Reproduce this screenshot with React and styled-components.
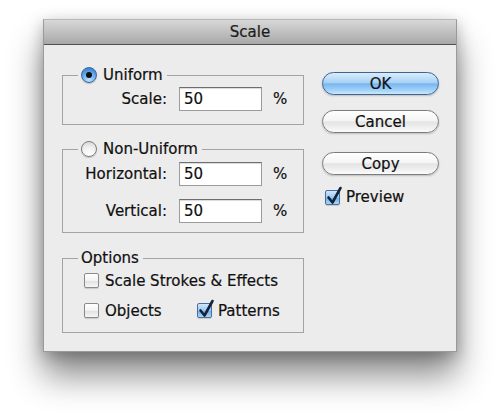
import React from 'react'
import styled, { createGlobalStyle } from 'styled-components';

const GlobalStyle = createGlobalStyle`
  html, body {
    margin: 0;
    padding: 0;
    background: #ffffff;
  }
  body {
    font-family: "DejaVu Sans", "Liberation Sans", sans-serif;
    color: #101010;
    -webkit-text-stroke: 0.2px #101010;
  }
`;

const Page = styled.div`
  width: 500px;
  height: 413px;
  padding: 19px 0 0 43px;
  box-sizing: border-box;
  overflow: hidden;
`;

const Dialog = styled.div`
  width: 414px;
  height: 333px;
  box-sizing: border-box;
  background: #ececec;
  border: 1px solid #9a9a9a;
  border-top: 1px solid #b8b8b8;
  box-shadow: 0 24px 32px rgba(0, 0, 0, 0.45), 0 4px 14px rgba(0, 0, 0, 0.25);
  display: flex;
  flex-direction: column;
`;

const TitleBar = styled.div`
  height: 24px;
  flex: none;
  background: linear-gradient(#d8d8d8, #a8a8a8);
  border-bottom: 1px solid #4f4f4f;
  display: flex;
  align-items: center;
  justify-content: center;
  font-size: 15px;
  color: #1e1e1e;
`;

const Body = styled.div`
  display: flex;
  gap: 18px;
  padding: 21px 0 0 18px;
`;

const LeftColumn = styled.div`
  width: 242px;
  display: flex;
  flex-direction: column;
`;

const Group = styled.fieldset`
  margin: 0 0 ${p => p.$gap || 0}px 0;
  padding: ${p => p.$pad || '3px 0 13px 0'};
  min-width: 0;
  border: 1px solid #a3a3a3;
  display: flex;
  flex-direction: column;
  gap: ${p => p.$rowGap || 0}px;
`;

const Legend = styled.legend`
  margin-left: 15px;
  padding: 0 4px 0 3px;
  height: 18px;
  display: flex;
  align-items: center;
  gap: 6px;
  font-size: 15px;
  line-height: 18px;
`;

const Radio = styled.span`
  width: 16px;
  height: 16px;
  box-sizing: border-box;
  border-radius: 50%;
  display: inline-flex;
  align-items: center;
  justify-content: center;
  border: 1px solid ${p => (p.$on ? '#3d679b' : '#7d7d7d')};
  background: ${p =>
    p.$on
      ? 'radial-gradient(circle at 50% 85%, #bfe2ff 0%, #6fb0ee 45%, #3f86d6 80%)'
      : 'radial-gradient(circle at 50% 90%, #ffffff 0%, #f1f1f1 50%, #d2d2d2 100%)'};
  box-shadow: 0 1px 1px rgba(0, 0, 0, 0.2);
  &::after {
    content: '';
    display: ${p => (p.$on ? 'block' : 'none')};
    width: 6px;
    height: 6px;
    border-radius: 50%;
    background: #111;
  }
`;

const Row = styled.div`
  display: grid;
  grid-template-columns: 104px 83px auto;
  column-gap: 12px;
  align-items: center;
  font-size: 15px;
`;

const Label = styled.span`
  text-align: right;
`;

const Input = styled.div`
  height: 24px;
  box-sizing: border-box;
  background: #fff;
  border: 1px solid #9b9b9b;
  border-top-color: #6e6e6e;
  box-shadow: inset 0 1px 1px rgba(0, 0, 0, 0.15);
  padding: 0 4px;
  display: flex;
  align-items: center;
  font-size: 15px;
`;

const Percent = styled.span`
  margin-left: -1px;
`;

const CheckRow = styled.div`
  height: 19px;
  display: flex;
  align-items: center;
  padding-left: 21px;
`;

const CheckItem = styled.label`
  display: flex;
  align-items: center;
  gap: 6px;
  font-size: 15px;
  width: ${p => (p.$w ? `${p.$w}px` : 'auto')};
`;

const Box = styled.span`
  position: relative;
  width: 15px;
  height: 15px;
  box-sizing: border-box;
  border-radius: 2px;
  border: 1px solid ${p => (p.$on ? '#4a6f9e' : '#8a8a8a')};
  background: ${p =>
    p.$on
      ? 'linear-gradient(#cfe6fc 0%, #9ccaf3 50%, #72b0ec 55%, #a9d6fb 100%)'
      : 'linear-gradient(#ffffff 0%, #f3f3f3 50%, #e2e2e2 55%, #f6f6f6 100%)'};
  box-shadow: 0 1px 1px rgba(0, 0, 0, 0.15);
  flex: none;
  svg {
    position: absolute;
    left: 0px;
    top: -5px;
  }
`;

const RightColumn = styled.div`
  width: 117px;
  padding-top: 6px;
  display: flex;
  flex-direction: column;
`;

const Button = styled.div`
  height: 23px;
  box-sizing: border-box;
  border-radius: 12px;
  margin-bottom: ${p => p.$gap || 0}px;
  display: flex;
  align-items: center;
  justify-content: center;
  font-size: 15px;
  color: #111;
  border: 1px solid ${p => (p.$primary ? '#3e6490' : '#7c7c7c')};
  background: ${p =>
    p.$primary
      ? 'linear-gradient(#d9ecfd 0%, #a9d2f7 45%, #78b6f0 52%, #9fd0f8 80%, #c9e8fd 100%)'
      : 'linear-gradient(#ffffff 0%, #f5f5f5 45%, #e4e4e4 52%, #f0f0f0 80%, #fbfbfb 100%)'};
  box-shadow: 0 1px 2px rgba(0, 0, 0, 0.2);
`;

const PreviewRow = styled.div`
  padding-left: 3px;
  height: 18px;
  display: flex;
  align-items: center;
`;

const Check = () => (
  <svg width="18" height="20" viewBox="0 0 18 20">
    <path d="M2.5 11.5 L6.5 16.5 L14.5 2" fill="none" stroke="#14223a" strokeWidth="2.6" strokeLinecap="round" strokeLinejoin="round" />
  </svg>
);

const CheckBox = ({ on }) => <Box $on={on}>{on && <Check />}</Box>;

const App = () => {
  return (
    <Page>
      <GlobalStyle />
      <Dialog>
        <TitleBar>Scale</TitleBar>
        <Body>
          <LeftColumn>
            <Group $gap={15}>
              <Legend><Radio $on />Uniform</Legend>
              <Row>
                <Label>Scale:</Label>
                <Input>50</Input>
                <Percent>%</Percent>
              </Row>
            </Group>
            <Group $gap={16} $pad="4px 0 9px 0" $rowGap={13}>
              <Legend><Radio />Non-Uniform</Legend>
              <Row>
                <Label>Horizontal:</Label>
                <Input>50</Input>
                <Percent>%</Percent>
              </Row>
              <Row>
                <Label>Vertical:</Label>
                <Input>50</Input>
                <Percent>%</Percent>
              </Row>
            </Group>
            <Group $pad="4px 0 12px 0" $rowGap={11}>
              <Legend>Options</Legend>
              <CheckRow>
                <CheckItem><CheckBox />Scale Strokes &amp; Effects</CheckItem>
              </CheckRow>
              <CheckRow>
                <CheckItem $w={113}><CheckBox />Objects</CheckItem>
                <CheckItem><CheckBox on />Patterns</CheckItem>
              </CheckRow>
            </Group>
          </LeftColumn>
          <RightColumn>
            <Button $primary $gap={15}>OK</Button>
            <Button $gap={19}>Cancel</Button>
            <Button $gap={13}>Copy</Button>
            <PreviewRow>
              <CheckItem><CheckBox on />Preview</CheckItem>
            </PreviewRow>
          </RightColumn>
        </Body>
      </Dialog>
    </Page>
  )
}

export default App
